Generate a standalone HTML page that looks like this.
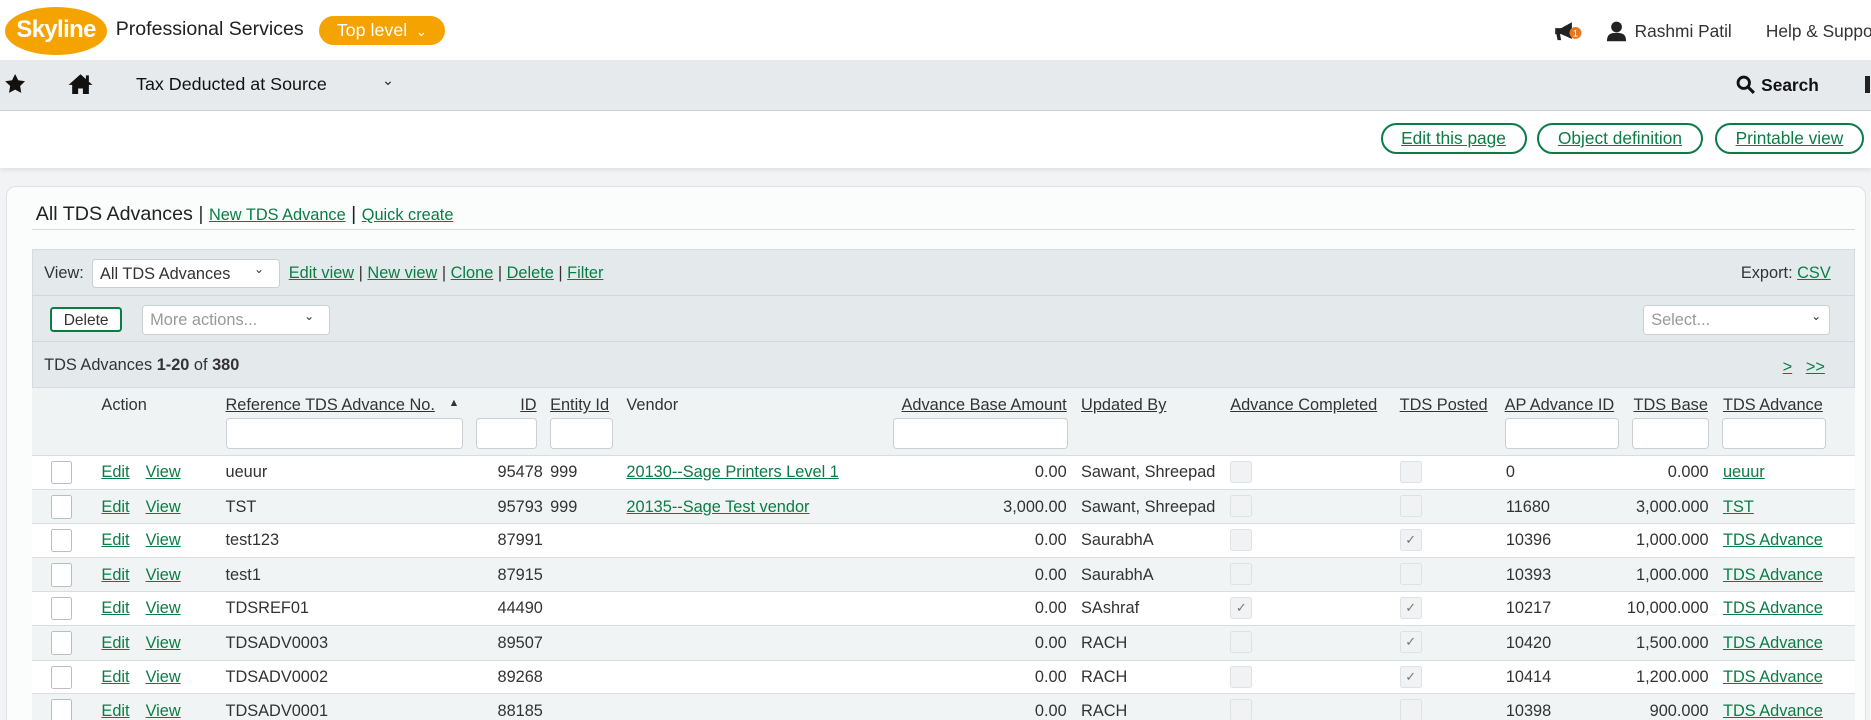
<!DOCTYPE html>
<html><head><meta charset="utf-8"><style>
html,body{margin:0;padding:0;width:1871px;height:720px;overflow:hidden;background:#f1f3f5}
#w{zoom:1.1932;width:1568px;height:604px;position:relative;font-family:"Liberation Sans",Arial,sans-serif;color:#333;font-size:13.7px;overflow:hidden}
.a{position:absolute;white-space:nowrap}
a,.l{color:#0a7d45;text-decoration:underline}
.btn{position:absolute;border:2px solid #0a7d45;border-radius:14px;height:23px;line-height:23px;text-align:center;font-size:14.5px;background:#fff}
.inp{position:absolute;background:#fff;border:1px solid #c9cfd3;border-radius:3px}
.row{position:absolute;left:27px;width:1528px;border-top:1px solid #d8dde0}
.cb{position:absolute;width:16px;height:18px;border:1px solid #b8bec2;background:#fff;border-radius:2px}
.cbd{position:absolute;width:17px;height:17px;background:#f1f2f3;border:1px solid #dfe2e4;border-radius:2px;font-size:11px;line-height:17px;text-align:center;color:#777}
.h{text-decoration:underline;color:#333}
.r{text-align:right}
</style></head><body><div id="w">
<div class="a" style="left:0;top:0;width:1568px;height:50px;background:#fff"></div>
<div class="a" style="left:4px;top:6px;width:86px;height:40px;border-radius:50%;background:#f5a300;color:#fff;font-weight:bold;font-size:20px;line-height:38px;text-align:center;letter-spacing:-0.5px">Skyline</div>
<div class="a" style="left:97px;top:15px;font-size:16.4px;color:#222">Professional Services</div>
<div class="a" style="left:267px;top:13px;width:106px;height:25px;border-radius:13px;background:#f5a300;color:#fff;font-size:15px;line-height:25px;text-align:center">Top level <span style="font-size:11px">&nbsp;⌄</span></div>
<svg class="a" style="left:1302px;top:18px" width="24" height="18" viewBox="0 0 24 18"><path d="M1 6h5l9-5v14l-9-4H5l1 5H3l-1-5H1z" fill="#222"/><circle cx="18" cy="10" r="5" fill="#e87722"/><text x="18" y="13" font-size="8" fill="#fff" text-anchor="middle" font-family="Liberation Sans">1</text></svg>
<svg class="a" style="left:1347px;top:18px" width="16" height="17" viewBox="0 0 16 17"><circle cx="8" cy="5" r="4.5" fill="#222"/><path d="M0 17c0-6 3-7 8-7s8 1 8 7z" fill="#222"/></svg>
<div class="a" style="left:1370px;top:18px;font-size:14.5px;color:#333">Rashmi Patil</div>
<div class="a" style="left:1480px;top:18px;font-size:14.5px;color:#333">Help &amp; Support</div>
<div class="a" style="left:0;top:50px;width:1568px;height:42px;background:#e7eaed;border-bottom:1px solid #cfd3d6"></div>
<svg class="a" style="left:4px;top:62px" width="17" height="16" viewBox="0 0 24 23"><path d="M12 0l3.7 7.5 8.3 1.2-6 5.8 1.4 8.3L12 18.9 4.6 22.8 6 14.5 0 8.7l8.3-1.2z" fill="#111"/></svg>
<svg class="a" style="left:57px;top:61px" width="21" height="18" viewBox="0 0 21 18"><path d="M10.5 1L0.5 10h3v8h5v-5h4v5h5v-8h3z" fill="#111"/><rect x="15" y="2" width="2.5" height="5" fill="#111"/></svg>
<div class="a" style="left:114px;top:62px;font-size:15px;color:#111">Tax Deducted at Source</div>
<div class="a" style="left:320px;top:61px;font-size:12px;color:#333">⌄</div>
<svg class="a" style="left:1455px;top:63px" width="16" height="16" viewBox="0 0 16 16"><circle cx="6.5" cy="6.5" r="4.8" stroke="#111" stroke-width="2.4" fill="none"/><path d="M10 10l5 5" stroke="#111" stroke-width="2.6"/></svg>
<div class="a" style="left:1476px;top:63px;font-size:14.5px;font-weight:bold;color:#111">Search</div>
<div class="a" style="left:1563px;top:64px;width:4px;height:14px;background:#222"></div>
<div class="a" style="left:0;top:93px;width:1568px;height:48px;background:#fff;box-shadow:0 2px 4px rgba(0,0,0,.08)"></div>
<div class="btn" style="left:1157px;top:103px;width:119px"><span class="l">Edit this page</span></div>
<div class="btn" style="left:1288px;top:103px;width:136px"><span class="l">Object definition</span></div>
<div class="btn" style="left:1437px;top:103px;width:122px"><span class="l">Printable view</span></div>
<div class="a" style="left:5px;top:156px;width:1557px;height:470px;background:#fbfcfc;border:1px solid #dde2e5;border-radius:8px"></div>
<div class="a" style="left:30px;top:170px;font-size:16.5px;color:#222">All TDS Advances <span style="color:#333">|</span> <span class="l" style="font-size:13.7px">New TDS Advance</span> <span>|</span> <span class="l" style="font-size:13.7px">Quick create</span></div>
<div class="a" style="left:27px;top:192px;width:1528px;height:1px;background:#d5dadd"></div>
<div class="a" style="left:27px;top:209px;width:1528px;height:116px;background:#e4eaec;border:1px solid #d5dcdf;box-sizing:border-box"></div>
<div class="a" style="left:27px;top:247px;width:1528px;height:1px;background:#d0d6d9"></div>
<div class="a" style="left:27px;top:286px;width:1528px;height:1px;background:#d0d6d9"></div>
<div class="a" style="left:37px;top:221px">View:</div>
<div class="inp" style="left:77px;top:217px;width:156px;height:23px"><span class="a" style="left:6px;top:4px">All TDS Advances</span><span class="a" style="left:135px;top:2px;font-size:10px">⌄</span></div>
<div class="a" style="left:242px;top:221px"><a>Edit view</a> | <a>New view</a> | <a>Clone</a> | <a>Delete</a> | <a>Filter</a></div>
<div class="a" style="left:1459px;top:221px">Export: <a>CSV</a></div>
<div class="a" style="left:42px;top:257px;width:57px;height:18px;border:2px solid #0a7d45;border-radius:3px;background:#fff;text-align:center;line-height:20px;font-size:13px">Delete</div>
<div class="inp" style="left:119px;top:256px;width:156px;height:23px"><span class="a" style="left:6px;top:4px;color:#999">More actions...</span><span class="a" style="left:135px;top:2px;font-size:10px">⌄</span></div>
<div class="inp" style="left:1377px;top:256px;width:155px;height:23px"><span class="a" style="left:6px;top:4px;color:#999">Select...</span><span class="a" style="left:140px;top:2px;font-size:10px">⌄</span></div>
<div class="a" style="left:37px;top:298px">TDS Advances <b>1-20</b> of <b>380</b></div>
<div class="a" style="left:1494px;top:300px"><a>&gt;</a> &nbsp; <a>&gt;&gt;</a></div>
<div class="a" style="left:27px;top:325px;width:1528px;height:56px;background:#f0f3f4"></div>
<div class="a" style="left:85px;top:332px">Action</div>
<div class="a h" style="left:189px;top:332px">Reference TDS Advance No.</div><div class="a" style="left:376px;top:333px;font-size:9px">▲</div>
<div class="a h" style="left:436px;top:332px">ID</div>
<div class="a h" style="left:461px;top:332px">Entity Id</div>
<div class="a" style="left:525px;top:332px">Vendor</div>
<div class="a h r" style="left:700px;width:194px;top:332px">Advance Base Amount</div>
<div class="a h" style="left:906px;top:332px">Updated By</div>
<div class="a h" style="left:1031px;top:332px">Advance Completed</div>
<div class="a h" style="left:1173px;top:332px">TDS Posted</div>
<div class="a h" style="left:1261px;top:332px">AP Advance ID</div>
<div class="a h" style="left:1369px;top:332px">TDS Base</div>
<div class="a h" style="left:1444px;top:332px">TDS Advance</div>
<div class="inp" style="left:189px;top:350px;width:197px;height:25px"></div>
<div class="inp" style="left:399px;top:350px;width:49px;height:25px"></div>
<div class="inp" style="left:461px;top:350px;width:51px;height:25px"></div>
<div class="inp" style="left:748px;top:350px;width:145px;height:25px"></div>
<div class="inp" style="left:1261px;top:350px;width:94px;height:25px"></div>
<div class="inp" style="left:1368px;top:350px;width:63px;height:25px"></div>
<div class="inp" style="left:1443px;top:350px;width:86px;height:25px"></div>
<div id="rows"></div>
</div>
<script>
var d=[["ueuur","95478","999","20130--Sage Printers Level 1","0.00","Sawant, Shreepad",0,0,"0","0.000","ueuur"],
["TST","95793","999","20135--Sage Test vendor","3,000.00","Sawant, Shreepad",0,0,"11680","3,000.000","TST"],
["test123","87991","","","0.00","SaurabhA",0,1,"10396","1,000.000","TDS Advance"],
["test1","87915","","","0.00","SaurabhA",0,0,"10393","1,000.000","TDS Advance"],
["TDSREF01","44490","","","0.00","SAshraf",1,1,"10217","10,000.000","TDS Advance"],
["TDSADV0003","89507","","","0.00","RACH",0,1,"10420","1,500.000","TDS Advance"],
["TDSADV0002","89268","","","0.00","RACH",0,1,"10414","1,200.000","TDS Advance"],
["TDSADV0001","88185","","","0.00","RACH",0,0,"10398","900.000","TDS Advance"]];
var h="",tops=[381,410,438,467,495,524,553,581];
d.forEach(function(r,i){var t=tops[i],bg=i%2?"#f1f4f5":"#fff",ty=t+7;
h+='<div class="row" style="top:'+t+'px;height:29px;background:'+bg+'"></div>';
h+='<div class="cb" style="left:43px;top:'+(t+5)+'px"></div>';
h+='<div class="a" style="left:85px;top:'+ty+'px"><a>Edit</a></div><div class="a" style="left:122px;top:'+ty+'px"><a>View</a></div>';
h+='<div class="a" style="left:189px;top:'+ty+'px">'+r[0]+'</div>';
h+='<div class="a r" style="left:395px;width:60px;top:'+ty+'px">'+r[1]+'</div>';
h+='<div class="a" style="left:461px;top:'+ty+'px">'+r[2]+'</div>';
if(r[3])h+='<div class="a" style="left:525px;top:'+ty+'px"><a>'+r[3]+'</a></div>';
h+='<div class="a r" style="left:794px;width:100px;top:'+ty+'px">'+r[4]+'</div>';
h+='<div class="a" style="left:906px;top:'+ty+'px">'+r[5]+'</div>';
h+='<div class="cbd" style="left:1031px;top:'+(t+5)+'px">'+(r[6]?'✓':'')+'</div>';
h+='<div class="cbd" style="left:1173px;top:'+(t+5)+'px">'+(r[7]?'✓':'')+'</div>';
h+='<div class="a" style="left:1262px;top:'+ty+'px">'+r[8]+'</div>';
h+='<div class="a r" style="left:1340px;width:92px;top:'+ty+'px">'+r[9]+'</div>';
h+='<div class="a" style="left:1444px;top:'+ty+'px"><a>'+r[10]+'</a></div>';});
document.getElementById("rows").outerHTML=h;
</script>
</body></html>
